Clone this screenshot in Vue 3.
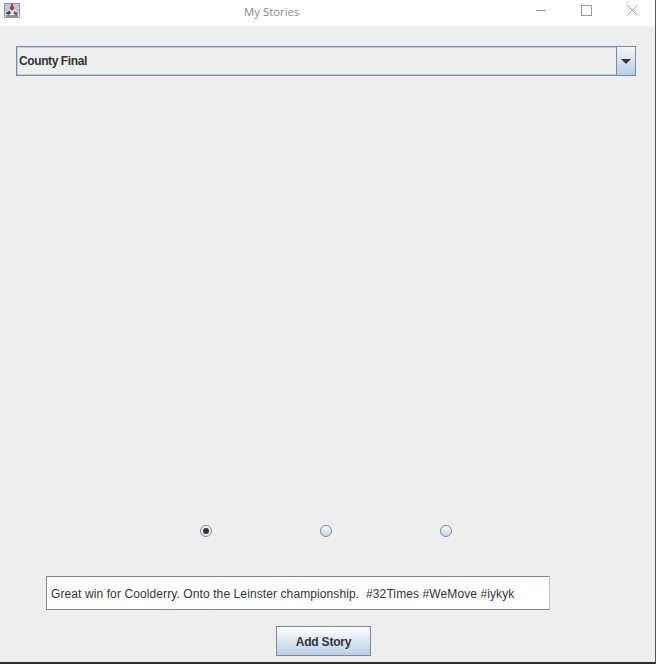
<script setup>
const options = [{ id: 1, on: true }, { id: 2, on: false }, { id: 3, on: false }]
</script>

<template>
  <div class="window">
    <header class="titlebar">
      <svg class="app-icon" width="16" height="15" viewBox="0 0 16 15">
        <rect x="0.5" y="0.5" width="15" height="14" fill="#bccada" stroke="#8595a6" />
        <path d="M1 13 L8 4 L15 11 L15 14 L1 14 Z" fill="#f6f6f6" />
        <path d="M2 10 L6 7.5 L7 10.5 L4 12 Z" fill="#3a3f48" />
        <path d="M10 8 L14 10 L13 12.5 L9.5 11 Z" fill="#59606b" />
        <path d="M2 13 H14" stroke="#2f3238" />
        <path d="M8 1.5 L10.5 5 L8 8 L5.5 5 Z" fill="#d2202a" />
        <path d="M8 0.5 V3" stroke="#5e2227" />
      </svg>
      <span class="title">My Stories</span>
      <div class="controls">
        <svg class="ctl" width="46" height="20" viewBox="0 0 46 20"><path d="M20 10.5 H30" stroke="#9a9a9a" /></svg>
        <svg class="ctl" width="46" height="20" viewBox="0 0 46 20"><rect x="19.5" y="5.5" width="10" height="10" fill="none" stroke="#9a9a9a" /></svg>
        <svg class="ctl" width="46" height="20" viewBox="0 0 46 20"><path d="M19 5 L29.5 15.5 M29.5 5 L19 15.5" stroke="#9a9a9a" /></svg>
      </div>
    </header>

    <main class="content">
      <div class="combo">
        <span class="combo-text">County Final</span>
        <span class="combo-btn"><span class="arrow"></span></span>
      </div>

      <div class="radios">
        <span v-for="o in options" :key="o.id" class="radio" :class="{ on: o.on }">
          <span v-if="o.on" class="dot"></span>
        </span>
      </div>

      <div class="field">Great win for Coolderry. Onto the Leinster championship.&nbsp; #32Times #WeMove #iykyk</div>

      <button class="add" type="button">Add Story</button>
    </main>
  </div>
</template>

<style>
html, body { margin: 0; padding: 0; }
</style>

<style scoped>
.window {
  width: 656px;
  height: 664px;
  box-sizing: border-box;
  display: flex;
  flex-direction: column;
  background: #eeeeee;
  border-right: 1px solid #55585c;
  border-bottom: 2px solid #2e2e2e;
  font-family: "Liberation Sans", Arial, sans-serif;
  overflow: hidden;
}
.titlebar {
  height: 26px;
  flex: none;
  background: #ffffff;
  display: flex;
  align-items: center;
  padding-left: 4px;
  position: relative;
}
.app-icon { margin-top: -6px; }
.title {
  position: absolute;
  left: 244px;
  top: 4px;
  font-size: 11.4px;
  line-height: 15px;
  color: #8a8a8a;
  font-family: "Open Sans", "Liberation Sans", sans-serif;
}
.controls {
  margin-left: auto;
  margin-right: 1px;
  display: flex;
  margin-top: -6px;
}
.ctl { display: block; }
.content {
  flex: 1;
  display: flex;
  flex-direction: column;
  padding: 20px 19px 0 16px;
}
.combo {
  height: 30px;
  box-sizing: border-box;
  border: 1px solid #7a8a9e;
  display: flex;
  flex: none;
  background: #eeeeee;
  box-shadow: inset 0 0 0 1px #b8cfe5;
}
.combo-text {
  flex: 1;
  padding-left: 2px;
  font-size: 12px;
  font-weight: 700;
  letter-spacing: -0.4px;
  line-height: 29px;
  color: #333333;
}
.combo-btn {
  width: 18px;
  flex: none;
  border-left: 1px solid #7a8a9e;
  background: linear-gradient(#f2f6fa, #b8cfe5);
  display: flex;
  align-items: center;
  justify-content: center;
}
.arrow {
  width: 0;
  height: 0;
  border-left: 5px solid transparent;
  border-right: 5px solid transparent;
  border-top: 5px solid #333333;
  margin-top: 1px;
}
.radios {
  margin-top: 449px;
  margin-left: 184px;
  display: flex;
  gap: 108px;
  flex: none;
}
.radio {
  width: 12px;
  height: 12px;
  box-sizing: border-box;
  border: 1px solid #7a8a9e;
  border-radius: 50%;
  background: linear-gradient(#f4f7fa, #c6d8ea);
  display: flex;
  align-items: center;
  justify-content: center;
}
.radio.on { background: linear-gradient(#f4f7fa, #dde7f1); }
.dot {
  width: 6px;
  height: 6px;
  border-radius: 50%;
  background: #333333;
}
.field {
  margin-top: 39px;
  margin-left: 30px;
  width: 504px;
  height: 34px;
  flex: none;
  box-sizing: border-box;
  background: #ffffff;
  border: 1px solid #7a8a9e;
  border-right-color: #b8c3d0;
  padding-left: 4px;
  font-size: 12px;
  letter-spacing: 0.1px;
  line-height: 34px;
  color: #333333;
  white-space: nowrap;
}
.add {
  margin: 16px 0 0 260px;
  width: 95px;
  height: 30px;
  flex: none;
  box-sizing: border-box;
  padding: 1px 0 0 0;
  border: 1px solid #7a8a9e;
  border-radius: 0;
  background: linear-gradient(#ffffff, #b8cfe5);
  font-family: "Liberation Sans", Arial, sans-serif;
  font-size: 12px;
  font-weight: 700;
  letter-spacing: -0.2px;
  color: #333333;
}
</style>
